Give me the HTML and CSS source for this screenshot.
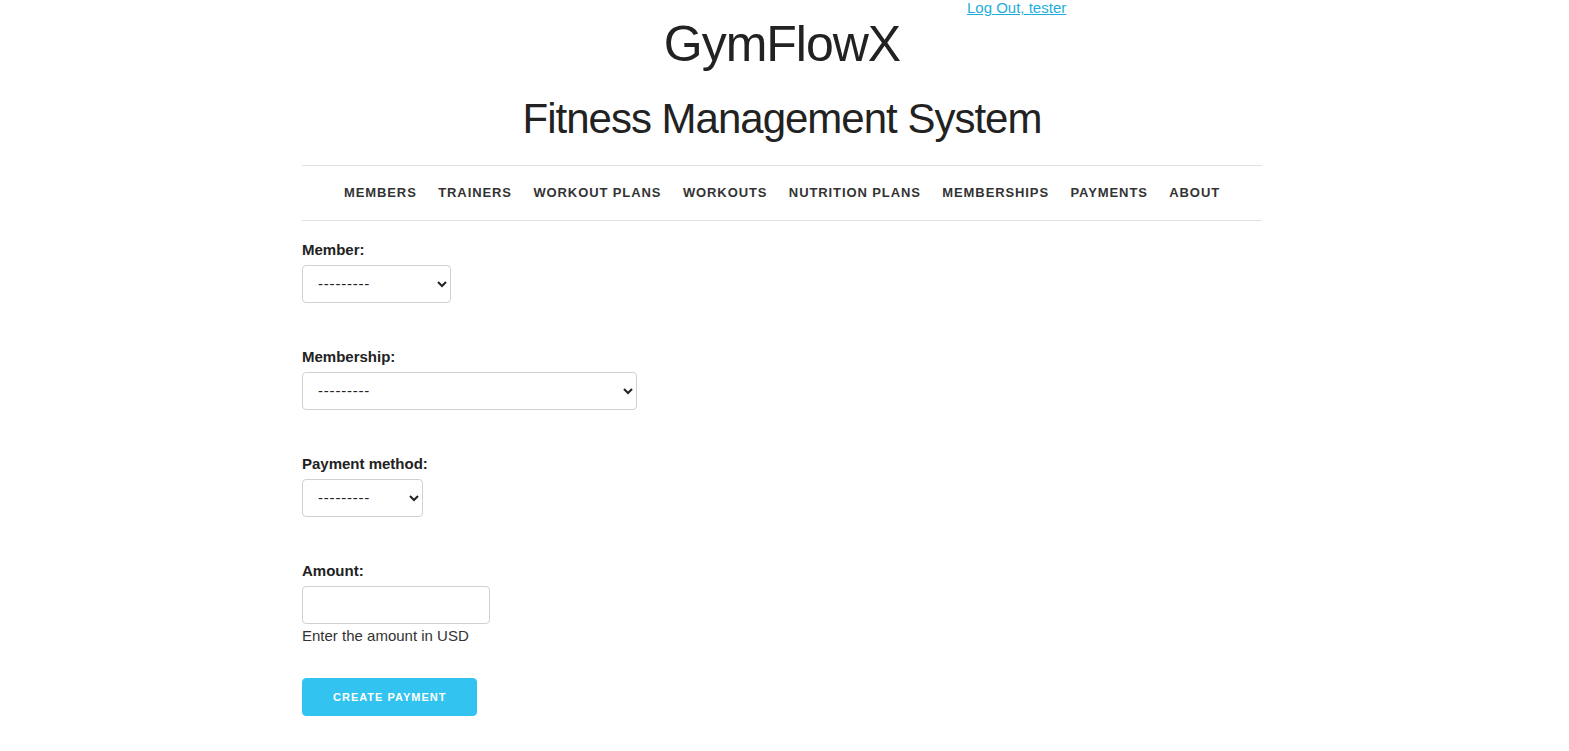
FILE: index.html
```html
<!DOCTYPE html>
<html lang="en">
<head>
  <meta charset="UTF-8" />
  <meta name="viewport" content="width=device-width, initial-scale=1.0" />
  <title>GymFlowX - Create Payment</title>
  <link rel="stylesheet" href="styles.css">
</head>
<body>
  <div class="container">
    <header class="site-header">
      <a class="logout" href="#">Log Out, tester</a>
      <h1>GymFlowX</h1>
      <h2>Fitness Management System</h2>
    </header>

    <nav class="navbar">
      <a href="#">Members</a>
      <a href="#">Trainers</a>
      <a href="#">Workout Plans</a>
      <a href="#">Workouts</a>
      <a href="#">Nutrition Plans</a>
      <a href="#">Memberships</a>
      <a href="#">Payments</a>
      <a href="#">About</a>
    </nav>

    <form class="payment-form">
      <div class="field">
        <label for="id_member">Member:</label>
        <select id="id_member" class="select-member">
          <option>---------</option>
        </select>
      </div>

      <div class="field">
        <label for="id_membership">Membership:</label>
        <select id="id_membership" class="select-membership">
          <option>---------</option>
        </select>
      </div>

      <div class="field">
        <label for="id_method">Payment method:</label>
        <select id="id_method" class="select-method">
          <option>---------</option>
        </select>
      </div>

      <div class="field field-last">
        <label for="id_amount">Amount:</label>
        <input type="text" id="id_amount" class="amount-input" />
        <span class="helptext">Enter the amount in USD</span>
      </div>

      <button type="submit" class="button-primary">Create Payment</button>
    </form>
  </div>
</body>
</html>
```

FILE: styles.css
```css
html { font-size: 62.5%; }

body {
  margin: 0;
  padding-right: 5px;
  font-family: "Liberation Sans", Arial, sans-serif;
  font-size: 1.5rem;
  line-height: 1.6;
  color: #222;
  background: #fff;
}

.container {
  max-width: 960px;
  margin: 0 auto;
}

.site-header {
  position: relative;
  text-align: center;
  padding-top: 14px;
}

.logout {
  position: absolute;
  top: -4px;
  left: 665px;
  color: #1EAEDB;
  font-size: 15px;
}

h1 {
  margin: 0;
  font-size: 50px;
  font-weight: 400;
  line-height: 1.2;
  letter-spacing: -1px;
}

h2 {
  margin: 19px 0 0;
  font-size: 42px;
  font-weight: 400;
  line-height: 1.25;
  letter-spacing: -1px;
}

.navbar {
  margin-top: 19px;
  border-top: 1px solid #E1E1E1;
  border-bottom: 1px solid #E1E1E1;
  height: 54px;
  display: flex;
  justify-content: center;
  align-items: center;
  gap: 21.5px;
}

.navbar a {
  color: #333;
  text-decoration: none;
  text-transform: uppercase;
  font-size: 13px;
  font-weight: 700;
  letter-spacing: 0.9px;
  padding-top: 2px;
}

.payment-form {
  padding-top: 17px;
}

.field {
  display: flex;
  flex-direction: column;
  align-items: flex-start;
  margin-bottom: 42px;
}

.field-last { margin-bottom: 30px; }

label {
  font-weight: 700;
  line-height: 24px;
  margin-bottom: 3px;
}

select, .amount-input {
  box-sizing: border-box;
  height: 38px;
  padding: 6px 10px 6px 11px;
  border: 1px solid #D1D1D1;
  border-radius: 4px;
  background: #fff;
  font-family: inherit;
  font-size: 15px;
  color: #222;
}

select { letter-spacing: 0.8px; }

.select-member { width: 149px; }
.select-membership { width: 335px; }
.select-method { width: 121px; }
.amount-input { width: 188px; }

.helptext {
  color: #333;
  line-height: 24px;
}

.button-primary {
  display: block;
  height: 38px;
  padding: 0 30px;
  background: #33C3F0;
  border: 1px solid #33C3F0;
  border-radius: 4px;
  color: #fff;
  font-family: inherit;
  font-size: 11px;
  font-weight: 700;
  letter-spacing: 1px;
  text-transform: uppercase;
  cursor: pointer;
}
```
